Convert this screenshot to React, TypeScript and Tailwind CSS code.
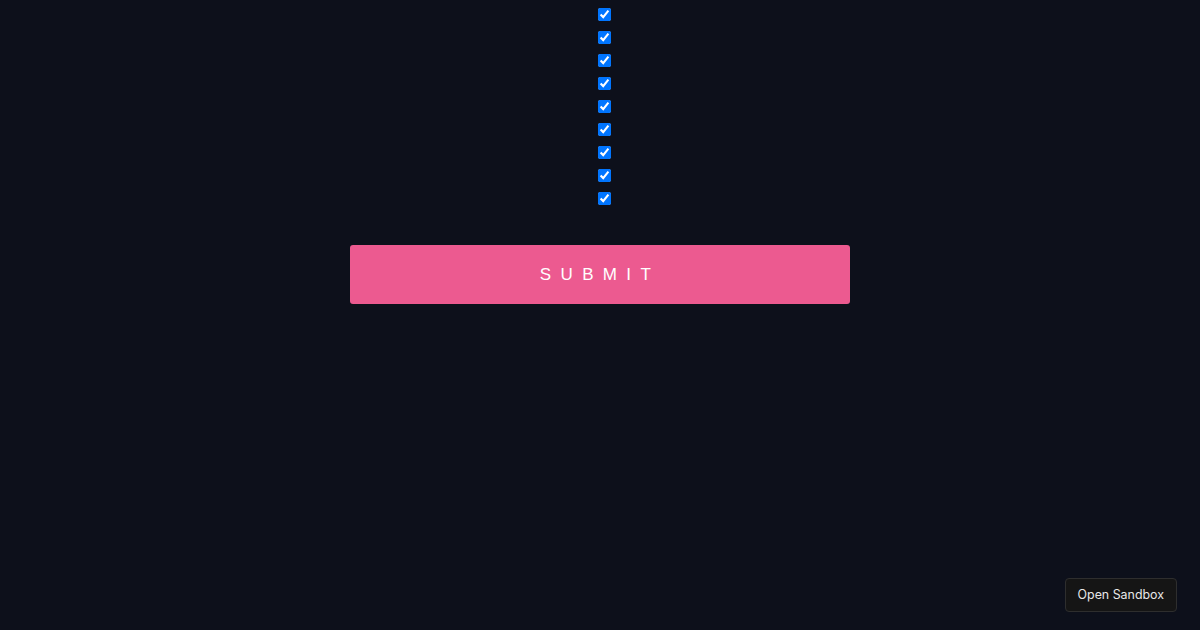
const boxes = Array.from({ length: 9 }, (_, i) => i);

export default function App() {
  return (
    <div className="relative min-h-[630px] w-full bg-[#0d101b] font-['Liberation_Sans',Arial,sans-serif]">
      <div className="flex flex-col items-center pt-[8px]">
        <div className="flex flex-col gap-[10px] pl-[9px]">
          {boxes.map((i) => (
            <input key={i} type="checkbox" defaultChecked className="m-0 block h-[13px] w-[13px]" />
          ))}
        </div>
        <button className="mt-[40px] h-[59px] w-[500px] rounded-[3px] bg-[#ec5a90] text-[17px] tracking-[0.55em] text-white">
          SUBMIT
        </button>
      </div>
      <button className="absolute bottom-[18px] right-[23px] h-[34px] rounded-[4px] border border-[#2e2e2e] bg-[#151515] px-[12px] font-['Inter',sans-serif] text-[12.4px] text-[#e8e8e8]">
        Open Sandbox
      </button>
    </div>
  );
}
